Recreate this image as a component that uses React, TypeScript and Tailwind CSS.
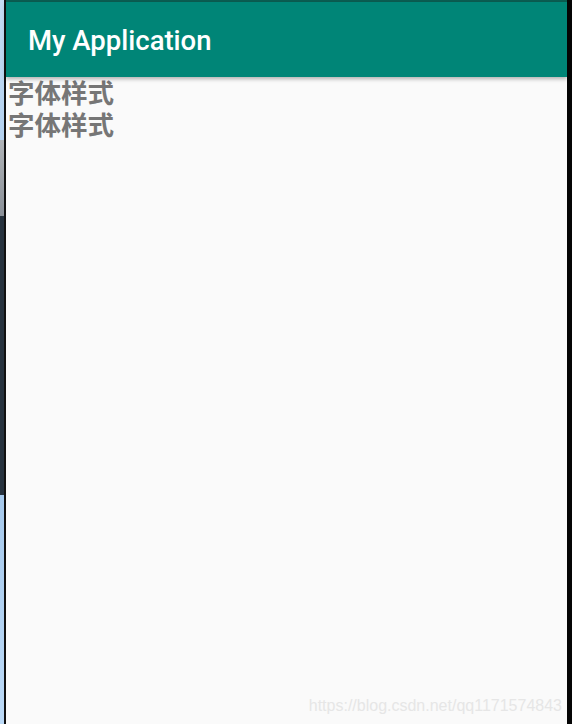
import React from "react";

export default function App() {
  return (
    <div className="relative flex h-[724px] w-[572px] overflow-hidden bg-[#fafafa]">
      <div className="flex w-[4px] flex-col">
        <div className="h-[140px] bg-gradient-to-b from-[#c4dcf2] to-[#b3d1ef]" />
        <div className="h-[76px] bg-gradient-to-b from-[#b0b4b8] to-[#8a9098]" />
        <div className="h-[279px] bg-[#27333f]" />
        <div className="flex-1 bg-gradient-to-b from-[#a6c9ec] to-[#bcdaf7]" />
      </div>
      <div className="w-[2px] bg-[#111]" />
      <div className="flex flex-1 flex-col">
        <div className="h-[2px] bg-[#0b5e52]" />
        <div className="relative z-10 flex h-[75px] items-center bg-[#008577] pl-[22px] pt-[3px] shadow-[0_2px_4px_rgba(0,0,0,0.3)]">
          <span
            className="text-[27.5px] font-medium text-white"
            style={{ fontFamily: "Roboto, sans-serif" }}
          >
            My Application
          </span>
        </div>
        <div
          className="-mt-[1px] flex flex-col pl-[2px] text-[26.5px] font-semibold leading-[32px] text-[#767676]"
          style={{ fontFamily: '"Noto Sans CJK SC", sans-serif' }}
        >
          <span>字体样式</span>
          <span>字体样式</span>
        </div>
      </div>
      <div className="w-[5px] bg-[#050505]" />
      <span
        className="absolute right-[10px] top-[694px] text-[16px] text-[#e6e6e6]"
        style={{ fontFamily: '"Liberation Sans", Arial, sans-serif' }}
      >
        https://blog.csdn.net/qq1171574843
      </span>
    </div>
  );
}
